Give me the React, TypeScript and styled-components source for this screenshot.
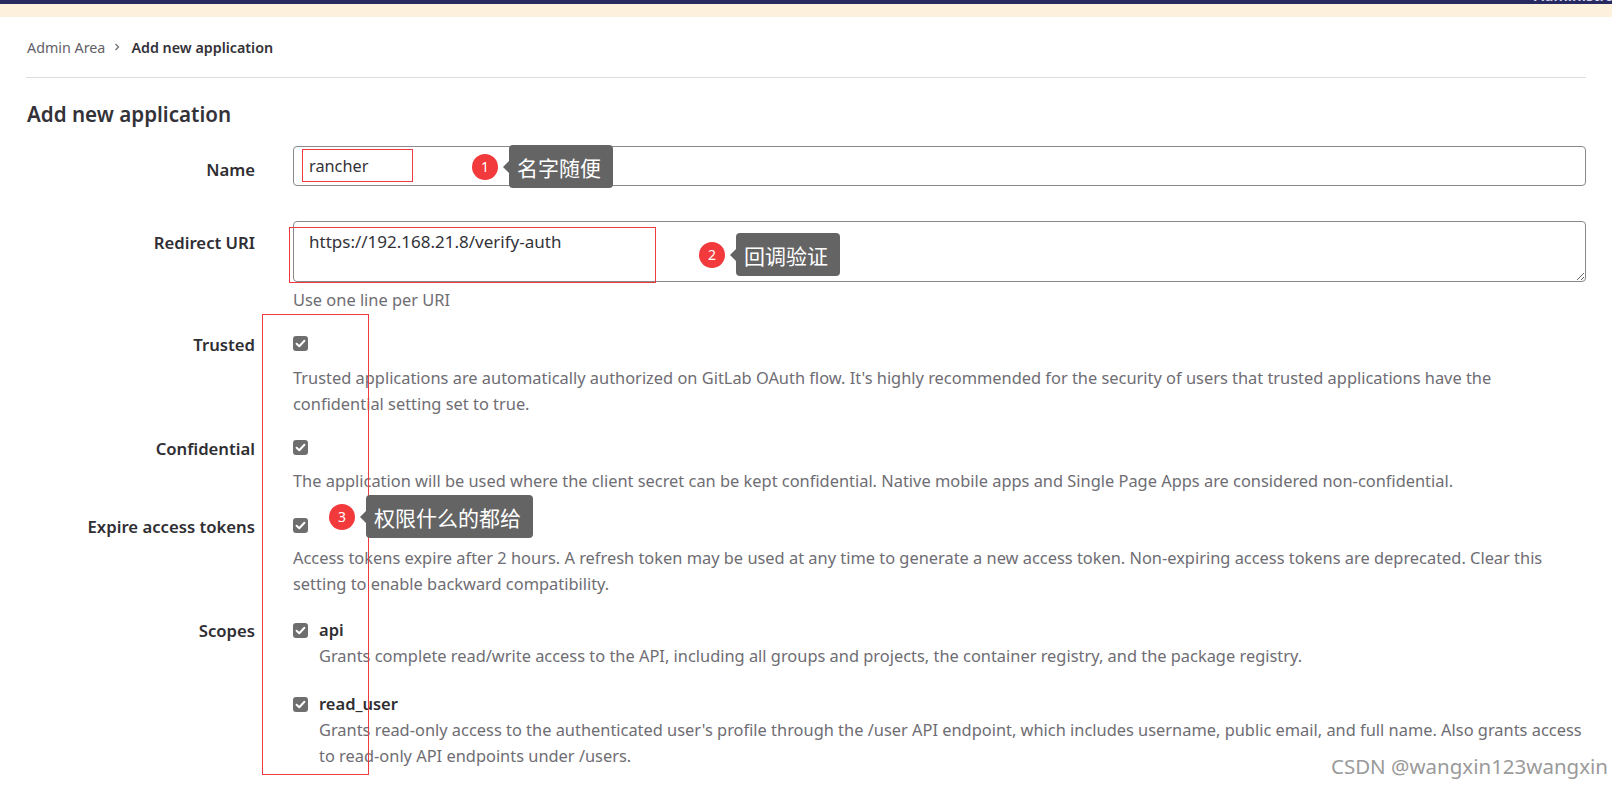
import React from 'react'
import styled, { createGlobalStyle } from 'styled-components'

const GlobalStyle = createGlobalStyle`
  html, body {
    margin: 0;
    padding: 0;
    background: #fff;
  }
  body {
    font-family: "Noto Sans", "Noto Sans CJK SC", sans-serif;
    color: #333238;
  }
  * {
    box-sizing: border-box;
  }
`

type Scope = { name: string; lines: Array<string> }

const scopes: Array<Scope> = [
  {
    name: 'api',
    lines: [
      'Grants complete read/write access to the API, including all groups and projects, the container registry, and the package registry.',
    ],
  },
  {
    name: 'read_user',
    lines: [
      "Grants read-only access to the authenticated user's profile through the /user API endpoint, which includes username, public email, and full name. Also grants access",
      'to read-only API endpoints under /users.',
    ],
  },
]

const Check: React.FC = () => (
  <Box>
    <svg width="15" height="15" viewBox="0 0 15 15">
      <path
        d="M3.6 7.8 L6.3 10.3 L11.4 4.8"
        fill="none"
        stroke="#fff"
        strokeWidth="2"
        strokeLinecap="round"
        strokeLinejoin="round"
      />
    </svg>
  </Box>
)

const Chevron: React.FC = () => (
  <svg width="8" height="10" viewBox="0 0 8 10">
    <path d="M2.5 2 L5.5 5 L2.5 8" fill="none" stroke="#737278" strokeWidth="1.3" />
  </svg>
)

const HelpLines: React.FC<{ lines: Array<string>; gap?: number }> = ({ lines, gap }) => (
  <Help $gap={gap}>
    {lines.map((line, i) => (
      <Line key={i}>{line}</Line>
    ))}
  </Help>
)

const App: React.FC = () => {
  return (
    <Root>
      <GlobalStyle />
      <TopBar>
        <TopBarUser>Administrator</TopBarUser>
      </TopBar>
      <Banner />
      <Content>
        <Breadcrumbs>
          <Crumb>Admin Area</Crumb>
          <Chevron />
          <CurrentCrumb>Add new application</CurrentCrumb>
        </Breadcrumbs>
        <Heading>Add new application</Heading>

        <Form>
          <Row>
            <Label $pad={11}>Name</Label>
            <Field>
              <TextInput defaultValue="rancher" readOnly />
            </Field>
          </Row>

          <Row $gap={35}>
            <Label $pad={9}>Redirect URI</Label>
            <Field>
              <TextArea defaultValue="https://192.168.21.8/verify-auth" readOnly />
              <Help $gap={5}>Use one line per URI</Help>
            </Field>
          </Row>

          <Row $gap={17}>
            <Label $pad={2}>Trusted</Label>
            <Field>
              <CheckLine>
                <Check />
              </CheckLine>
              <HelpLines
                gap={9}
                lines={[
                  "Trusted applications are automatically authorized on GitLab OAuth flow. It's highly recommended for the security of users that trusted applications have the",
                  'confidential setting set to true.',
                ]}
              />
            </Field>
          </Row>

          <Row $gap={17}>
            <Label $pad={2}>Confidential</Label>
            <Field>
              <CheckLine>
                <Check />
              </CheckLine>
              <HelpLines
                gap={8}
                lines={[
                  'The application will be used where the client secret can be kept confidential. Native mobile apps and Single Page Apps are considered non-confidential.',
                ]}
              />
            </Field>
          </Row>

          <Row $gap={18}>
            <Label $pad={2}>Expire access tokens</Label>
            <Field>
              <CheckLine>
                <Check />
              </CheckLine>
              <HelpLines
                gap={7}
                lines={[
                  'Access tokens expire after 2 hours. A refresh token may be used at any time to generate a new access token. Non-expiring access tokens are deprecated. Clear this',
                  'setting to enable backward compatibility.',
                ]}
              />
            </Field>
          </Row>

          <Row $gap={20}>
            <Label $pad={1}>Scopes</Label>
            <Field>
              {scopes.map((scope, i) => (
                <ScopeItem key={scope.name} $gap={i === 0 ? 0 : 22}>
                  <CheckLine>
                    <Check />
                  </CheckLine>
                  <div>
                    <ScopeName>{scope.name}</ScopeName>
                    <HelpLines lines={scope.lines} />
                  </div>
                </ScopeItem>
              ))}
            </Field>
          </Row>
        </Form>
      </Content>

      <Marker $left={302} $top={149} $w={111} $h={33} />
      <Marker $left={289} $top={227} $w={367} $h={56} />
      <Marker $left={262} $top={314} $w={107} $h={461} />

      <Callout $left={472} $top={145}>
        <Num>1</Num>
        <Tip>名字随便</Tip>
      </Callout>
      <Callout $left={699} $top={233}>
        <Num>2</Num>
        <Tip>回调验证</Tip>
      </Callout>
      <Callout $left={329} $top={495}>
        <Num>3</Num>
        <Tip>权限什么的都给</Tip>
      </Callout>

      <Watermark>CSDN @wangxin123wangxin</Watermark>
    </Root>
  )
}

export default App

const Root = styled.div`
  position: relative;
  width: 1612px;
  height: 785px;
  overflow: hidden;
`

const TopBar = styled.div`
  height: 4px;
  background: #292961;
  overflow: hidden;
  padding-left: 1534px;
  white-space: nowrap;
`

const TopBarUser = styled.span`
  display: block;
  margin-top: -12px;
  font-size: 15px;
  line-height: 15px;
  font-weight: 600;
  color: #cfcfea;
`

const Banner = styled.div`
  height: 13px;
  background: #fdf0dd;
`

const Content = styled.div`
  padding: 0 26px;
`

const Breadcrumbs = styled.div`
  height: 61px;
  display: flex;
  align-items: center;
  gap: 8px;
  border-bottom: 1px solid #dcdcde;
  font-size: 14.3px;
  padding-left: 1px;
`

const Crumb = styled.span`
  color: #626168;
`

const CurrentCrumb = styled.span`
  color: #333238;
  font-weight: 600;
  margin-left: 2px;
`

const Heading = styled.h1`
  margin: 22px 0 18px 1px;
  font-size: 20.6px;
  line-height: 28px;
  font-weight: 600;
  color: #333238;
`

const Form = styled.div`
  display: flex;
  flex-direction: column;
`

const Row = styled.div<{ $gap?: number }>`
  display: grid;
  grid-template-columns: 229px 1fr;
  column-gap: 38px;
  margin-top: ${(p) => p.$gap ?? 0}px;
`

const Label = styled.div<{ $pad: number }>`
  text-align: right;
  font-size: 16.7px;
  line-height: 26px;
  font-weight: 600;
  color: #2f2e33;
  padding-top: ${(p) => p.$pad}px;
`

const Field = styled.div`
  min-width: 0;
`

const TextInput = styled.input`
  display: block;
  width: 100%;
  height: 40px;
  padding: 0 15px;
  border: 1px solid #89888d;
  border-radius: 4px;
  font-family: inherit;
  font-size: 16.3px;
  color: #333238;
  outline: none;
`

const TextArea = styled.textarea`
  display: block;
  width: 100%;
  height: 61px;
  padding: 7px 15px;
  border: 1px solid #89888d;
  border-radius: 4px;
  font-family: inherit;
  font-size: 17px;
  line-height: 26px;
  color: #333238;
  resize: vertical;
  outline: none;
`

const Help = styled.div<{ $gap?: number }>`
  margin-top: ${(p) => p.$gap ?? 0}px;
  font-size: 16.4px;
  line-height: 26px;
  color: #6e6d73;
`

const Line = styled.span`
  display: block;
  white-space: nowrap;
`

const CheckLine = styled.div`
  height: 26px;
  display: flex;
  align-items: center;
`

const Box = styled.span`
  width: 15px;
  height: 15px;
  border-radius: 3px;
  background: #6e6e6e;
  display: flex;
`

const ScopeItem = styled.div<{ $gap: number }>`
  display: grid;
  grid-template-columns: 15px 1fr;
  column-gap: 11px;
  margin-top: ${(p) => p.$gap}px;
`

const ScopeName = styled.div`
  font-size: 16.5px;
  line-height: 26px;
  font-weight: 600;
  color: #2f2e33;
`

const Marker = styled.div<{ $left: number; $top: number; $w: number; $h: number }>`
  position: absolute;
  left: ${(p) => p.$left}px;
  top: ${(p) => p.$top}px;
  width: ${(p) => p.$w}px;
  height: ${(p) => p.$h}px;
  border: 1px solid #ec3c3f;
  pointer-events: none;
`

const Callout = styled.div<{ $left: number; $top: number }>`
  position: absolute;
  left: ${(p) => p.$left}px;
  top: ${(p) => p.$top}px;
  display: flex;
  align-items: center;
  gap: 11px;
`

const Num = styled.span`
  width: 26px;
  height: 26px;
  border-radius: 50%;
  background: #f2393c;
  color: #fff;
  font-size: 14px;
  display: flex;
  align-items: center;
  justify-content: center;
`

const Tip = styled.span`
  position: relative;
  height: 43px;
  padding: 0 12px 0 8px;
  display: flex;
  align-items: center;
  background: #646464;
  border-radius: 4px;
  color: #fff;
  font-family: "Noto Sans CJK SC", sans-serif;
  font-size: 21px;

  &::before {
    content: '';
    position: absolute;
    left: -6px;
    top: 50%;
    margin-top: -6px;
    border-style: solid;
    border-width: 6px 6px 6px 0;
    border-color: transparent #646464 transparent transparent;
  }
`

const Watermark = styled.div`
  position: absolute;
  right: 4px;
  bottom: 5px;
  font-family: "Noto Sans", sans-serif;
  font-size: 20.5px;
  line-height: 27px;
  color: #9a9a9a;
`
